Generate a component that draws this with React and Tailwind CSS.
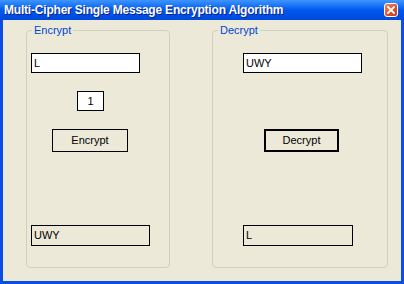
export default function App() {
  const ui = { fontFamily: '"Liberation Sans", Arial, sans-serif' };
  return (
    <div className="w-[404px] h-[284px] flex flex-col overflow-hidden bg-[#0a4ee4]" style={ui}>
      <div className="h-[20px] flex items-center justify-between pl-[4px] pr-[6px] bg-gradient-to-b from-[#3d95ff] via-[#0058ee] to-[#0048dc]">
        <span className="text-white font-bold text-[12px] tracking-[-0.2px] leading-none [text-shadow:1px_1px_0_#0a1e8a]">
          Multi-Cipher Single Message Encryption Algorithm
        </span>
        <div className="w-[14px] h-[14px] rounded-[3px] border border-white bg-gradient-to-br from-[#f08c6c] via-[#e0542f] to-[#c73a16] flex items-center justify-center">
          <svg width="8" height="8" viewBox="0 0 8 8">
            <path d="M1 1 L7 7 M7 1 L1 7" stroke="white" strokeWidth="1.8" strokeLinecap="square" />
          </svg>
        </div>
      </div>
      <div className="flex-1 flex px-[3px] pb-[3px] bg-[#0a4ee4]">
        <div className="flex-1 bg-[#ece9d8] flex items-start pt-[10px] pl-[23px] gap-[42px] text-[11px] text-black">
          {/* Encrypt group */}
          <div className="relative w-[144px] h-[238px] border border-[#d0d0bf] rounded-[4px] flex flex-col items-start">
            <span className="absolute left-[5px] top-[-7px] px-[2px] bg-[#ece9d8] text-[#0046d5] leading-[13px]">Encrypt</span>
            <div className="mt-[22px] ml-[4px] w-[109px] h-[20px] bg-white border border-black flex items-center pl-[2px]">L</div>
            <div className="mt-[18px] ml-[50px] w-[27px] h-[20px] bg-white border border-black flex items-center justify-center">1</div>
            <div className="mt-[18px] ml-[25px] w-[76px] h-[23px] border border-black flex items-center justify-center">Encrypt</div>
            <div className="mt-[73px] ml-[4px] w-[119px] h-[21px] border border-black flex items-center pl-[2px]">UWY</div>
          </div>
          {/* Decrypt group */}
          <div className="relative w-[176px] h-[238px] border border-[#d0d0bf] rounded-[4px] flex flex-col items-start">
            <span className="absolute left-[5px] top-[-7px] px-[2px] bg-[#ece9d8] text-[#0046d5] leading-[13px]">Decrypt</span>
            <div className="mt-[22px] ml-[30px] w-[119px] h-[20px] bg-white border border-black flex items-center pl-[2px]">UWY</div>
            <div className="mt-[56px] ml-[51px] w-[75px] h-[23px] border-2 border-black flex items-center justify-center">Decrypt</div>
            <div className="mt-[73px] ml-[30px] w-[110px] h-[21px] border border-black flex items-center pl-[2px]">L</div>
          </div>
        </div>
      </div>
    </div>
  );
}
